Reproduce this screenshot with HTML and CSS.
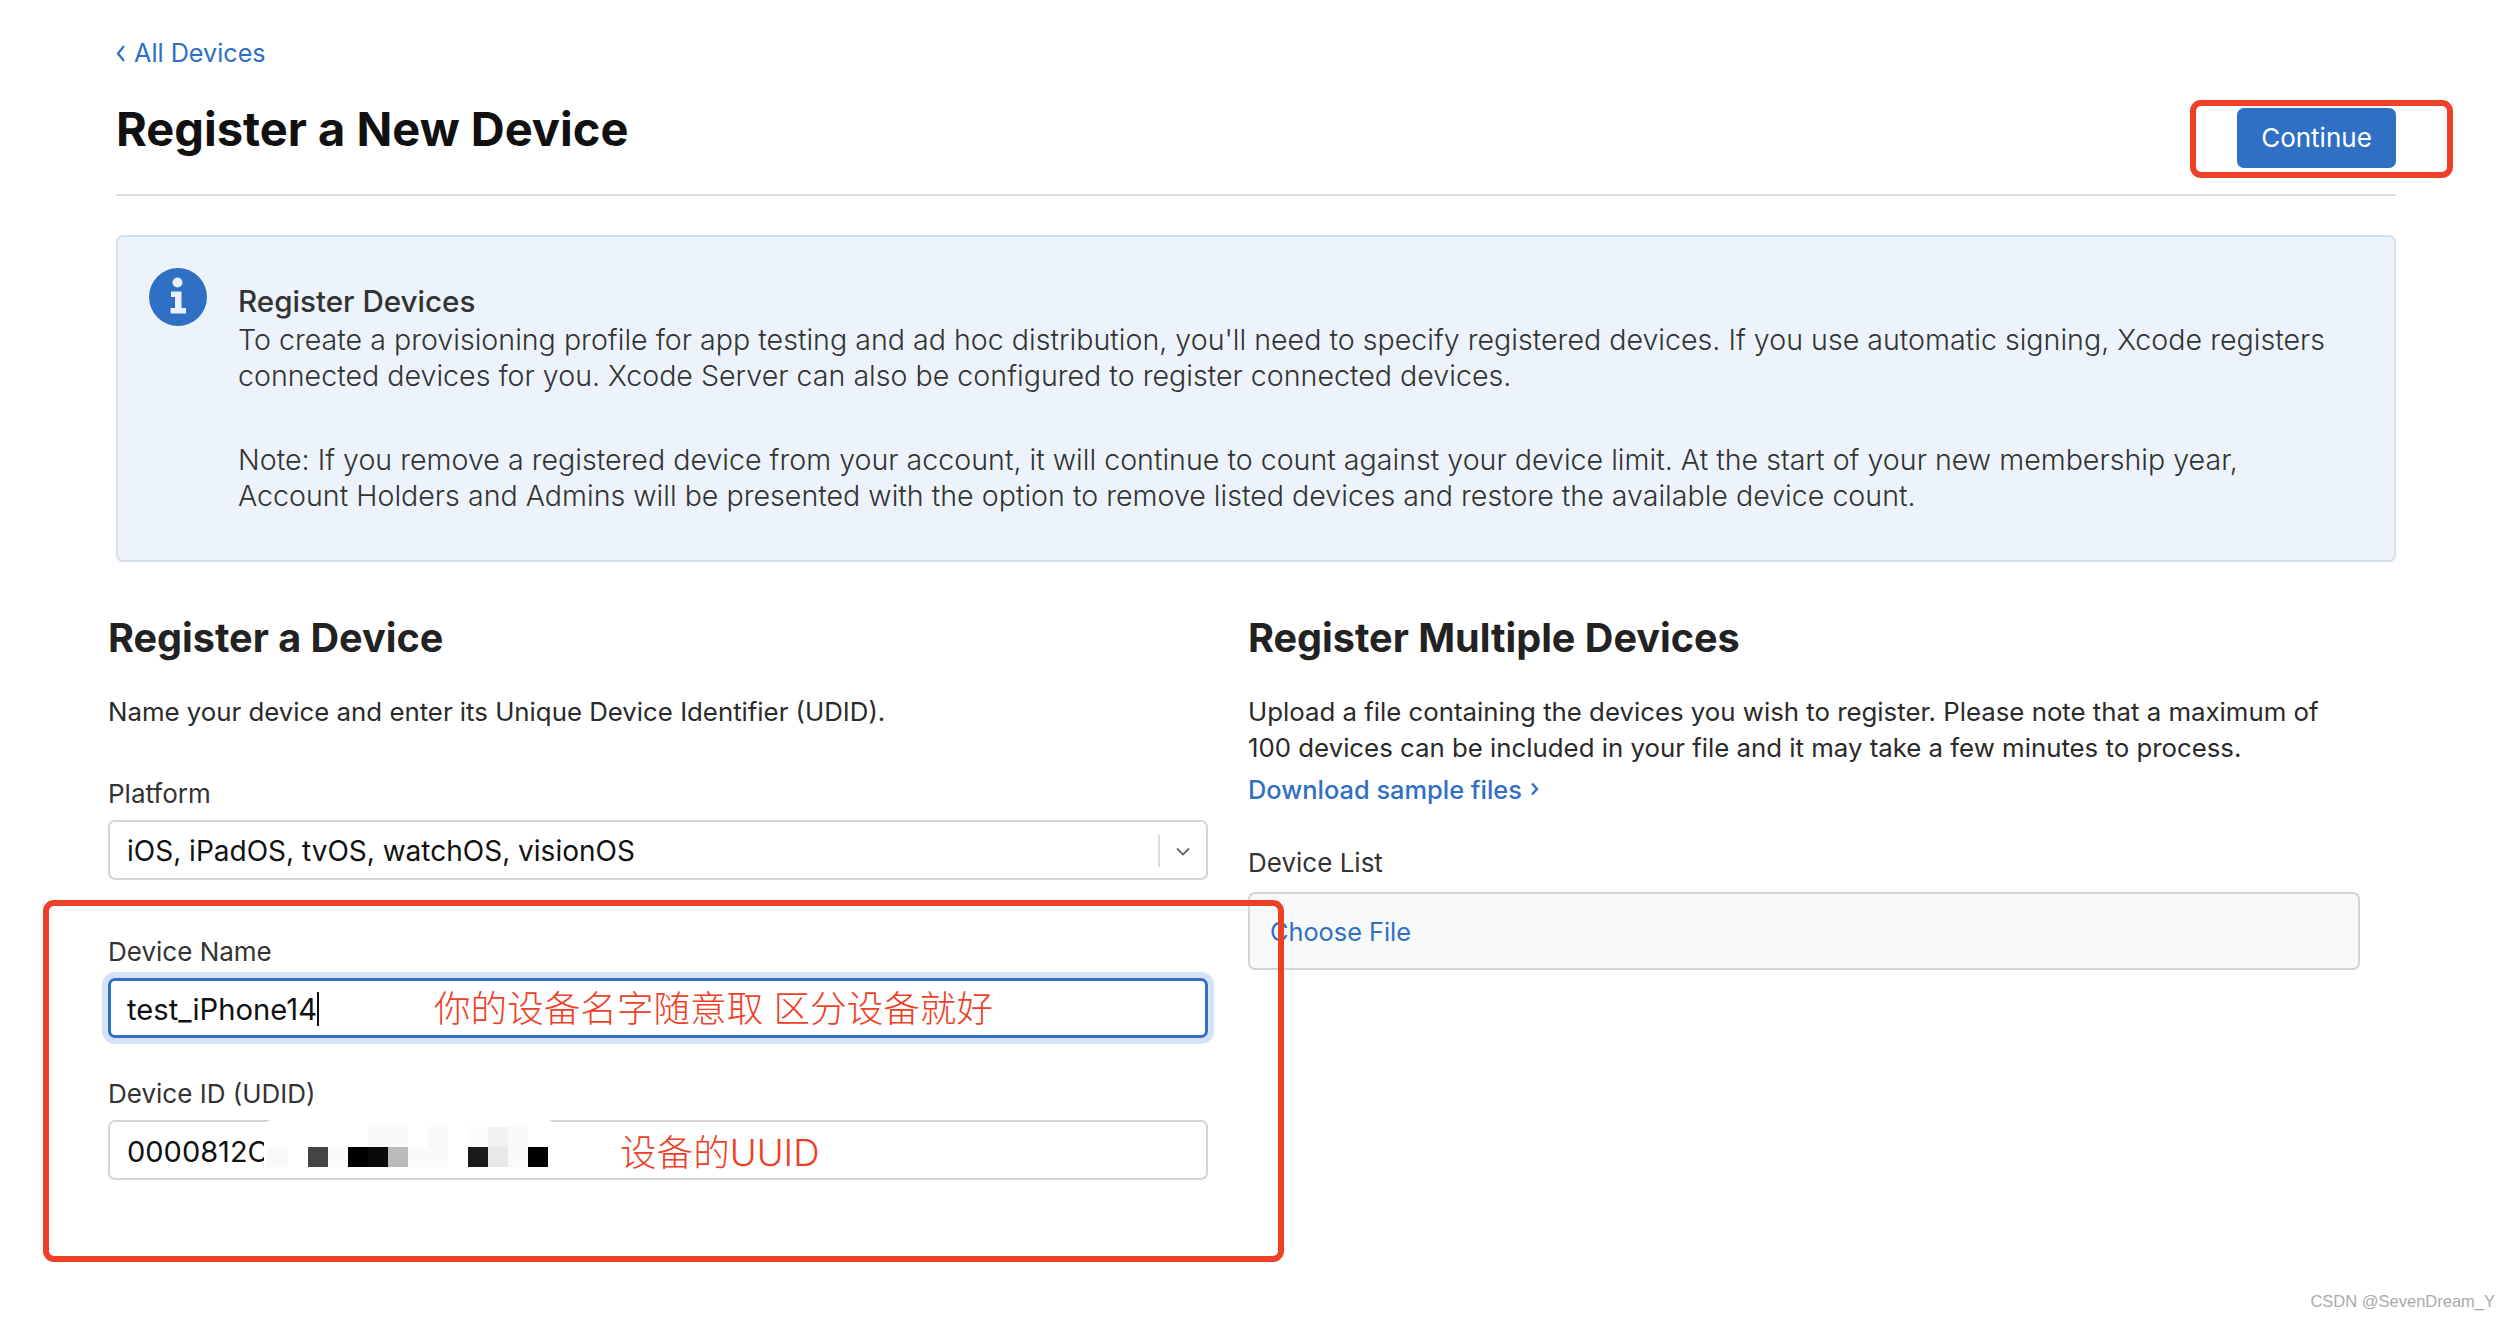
FILE: index.html
```html
<!DOCTYPE html>
<html lang="en">
<head>
    <meta charset="UTF-8">
    <title>Register a New Device</title>
    <link rel="stylesheet" href="styles.css">
</head>
<body>
    <div class="page">
        <a class="back" href="#">
            <svg class="back-icon" width="10" height="20" viewBox="0 0 10 20"><path d="M8 3 L2 10.5 L8 18" fill="none" stroke="#2f6fc4" stroke-width="2.2"/></svg>
            All Devices
        </a>
        <div class="header">
            <h1>Register a New Device</h1>
            <button class="continue">Continue</button>
        </div>

        <div class="info">
            <svg class="info-icon" width="58" height="58" viewBox="0 0 58 58">
                <circle cx="29" cy="29" r="29" fill="#2f6fc4"/>
                <circle cx="28.5" cy="14.5" r="5" fill="#e8f0fa"/>
                <path d="M22 23.5 H32.5 V40 H37 V45.5 H21.5 V40 H26 V29 H22 Z" fill="#e8f0fa"/>
            </svg>
            <div class="info-text">
                <h4>Register Devices</h4>
                <p class="lead">To create a provisioning profile for app testing and ad hoc distribution, you'll need to specify registered devices. If you use automatic signing, Xcode registers connected devices for you. Xcode Server can also be configured to register connected devices.</p>
                <p class="note">Note: If you remove a registered device from your account, it will continue to count against your device limit. At the start of your new membership year, Account Holders and Admins will be presented with the option to remove listed devices and restore the available device count.</p>
            </div>
        </div>

        <div class="columns">
            <div class="col col-single">
                <h2>Register a Device</h2>
                <p class="desc">Name your device and enter its Unique Device Identifier (UDID).</p>
                <label class="label label-platform">Platform</label>
                <div class="field select">
                    <span>iOS, iPadOS, tvOS, watchOS, visionOS</span>
                    <span class="select-arrow">
                        <svg width="14" height="9" viewBox="0 0 14 9"><path d="M1 1.5 L7 7.5 L13 1.5" fill="none" stroke="#666" stroke-width="1.8"/></svg>
                    </span>
                </div>
                <label class="label label-name">Device Name</label>
                <div class="field focused">
                    <span>test_iPhone14</span><span class="caret"></span>
                    <span class="note-red note-name">你的设备名字随意取 区分设备就好</span>
                </div>
                <label class="label label-udid">Device ID (UDID)</label>
                <div class="field">
                    <span>0000812C</span>
                    <svg class="mosaic" width="291" height="50" viewBox="-3 0 291 50">
                        <rect x="-3" width="291" height="50" rx="8" fill="#fff"/>
                        <rect x="0" y="27" width="21" height="20" fill="#f9f9f9"/>
                        <rect x="41" y="27" width="20" height="20" fill="#444"/>
                        <rect x="61" y="27" width="20" height="20" fill="#fafafa"/>
                        <rect x="81" y="27" width="20" height="20" fill="#000"/>
                        <rect x="101" y="27" width="20" height="20" fill="#0a0a0a"/>
                        <rect x="121" y="27" width="20" height="20" fill="#bbb"/>
                        <rect x="141" y="27" width="40" height="20" fill="#fafafa"/>
                        <rect x="201" y="27" width="20" height="20" fill="#1a1a1a"/>
                        <rect x="221" y="27" width="20" height="20" fill="#e8e8e8"/>
                        <rect x="241" y="27" width="20" height="20" fill="#fafafa"/>
                        <rect x="261" y="27" width="20" height="20" fill="#000"/>
                        <rect x="101" y="7" width="40" height="20" fill="#f9f9f9"/>
                        <rect x="161" y="7" width="20" height="20" fill="#f9f9f9"/>
                        <rect x="201" y="7" width="20" height="20" fill="#fbfbfb"/>
                        <rect x="221" y="7" width="20" height="20" fill="#f2f2f2"/>
                        <rect x="241" y="7" width="20" height="20" fill="#f9f9f9"/>
                    </svg>
                    <span class="note-red note-udid">设备的UUID</span>
                </div>
            </div>

            <div class="col col-multi">
                <h2>Register Multiple Devices</h2>
                <p class="desc">Upload a file containing the devices you wish to register. Please note that a maximum of 100 devices can be included in your file and it may take a few minutes to process.</p>
                <a class="sample" href="#">Download sample files
                    <svg width="9" height="16" viewBox="0 0 9 16"><path d="M2 2.5 L7 8 L2 13.5" fill="none" stroke="#2f6fc4" stroke-width="2.4"/></svg>
                </a>
                <label class="label label-list">Device List</label>
                <div class="file-box"><a href="#">Choose File</a></div>
            </div>
        </div>
    </div>

    <!-- red marks drawn over the screenshot -->
    <div class="mark mark-continue"></div>
    <div class="mark mark-form"></div>
    <div class="watermark">CSDN @SevenDream_Y</div>
</body>
</html>
```

FILE: styles.css
```css
*{
    margin: 0;
    padding: 0;
    box-sizing: border-box;
}
html, body{
    height: 1318px;
    overflow: hidden;
}
body{
    position: relative;
    background-color: #fff;
    font-family: Inter, "Noto Sans CJK SC", sans-serif;
    color: #333;
}
a{
    color: #2f6fc4;
    text-decoration: none;
}
.page{
    width: 2280px;
    margin-left: 116px;
    padding-top: 36px;
}
.back{
    display: flex;
    align-items: center;
    gap: 8px;
    height: 34px;
    font-size: 25.2px;
}
.header{
    display: flex;
    justify-content: space-between;
    align-items: flex-start;
    height: 126px;
    padding-top: 38px;
    border-bottom: 2px solid #ddd;
}
h1{
    margin-top: -7px;
    font-size: 47px;
    line-height: 56px;
    font-weight: 700;
    color: #111;
}
.continue{
    width: 159px;
    height: 60px;
    padding-bottom: 2px;
    background-color: #2f6fc4;
    color: #fff;
    border: none;
    border-radius: 7px;
    font-family: inherit;
    font-size: 26px;
}
.info{
    display: flex;
    height: 327px;
    margin-top: 39px;
    padding: 31px 30px 0 31px;
    background-color: #ecf3fa;
    border: 2px solid #cfe0f0;
    border-radius: 7px;
}
.info-icon{
    flex: none;
}
.info-text{
    width: 2100px;
    margin-left: 31px;
    padding-top: 15px;
    font-size: 28.6px;
    line-height: 36px;
    font-weight: 300;
}
.info-text h4{
    font-size: 29.6px;
    font-weight: 500;
}
.lead{
    margin-top: 3px;
}
.note{
    margin-top: 48px;
}
.columns{
    display: flex;
    gap: 40px;
    margin-left: -8px;
    margin-top: 53px;
}
.col-single{
    width: 1100px;
}
.col-multi{
    width: 1112px;
}
h2{
    font-size: 39.6px;
    line-height: 46px;
    font-weight: 700;
    color: #222;
}
.desc{
    margin-top: 33px;
    font-size: 25.8px;
    line-height: 36px;
    color: #2a2a2a;
}
.label{
    display: block;
    font-size: 26px;
    line-height: 30px;
}
.label-platform{
    margin-top: 49px;
}
.label-name{
    margin-top: 57px;
}
.label-udid{
    margin-top: 41px;
}
.label-list{
    margin-top: 41px;
}
.field{
    position: relative;
    display: flex;
    align-items: center;
    height: 60px;
    margin-top: 11px;
    padding-left: 17px;
    padding-top: 2px;
    border: 2px solid #d4d4d4;
    border-radius: 7px;
    font-size: 29px;
    font-weight: 400;
    color: #111;
}
.focused{
    border: 3px solid #2f6fc4;
    box-shadow: 0 0 0 6px #d5e2f3;
    padding-left: 16px;
    font-size: 29.2px;
}
.caret{
    width: 2px;
    height: 34px;
    background-color: #111;
}
.select{
    justify-content: space-between;
    font-size: 28px;
}
.select-arrow{
    display: flex;
    align-items: center;
    justify-content: center;
    width: 48px;
    height: 32px;
    border-left: 2px solid #ddd;
}
.mosaic{
    position: absolute;
    left: 154px;
    top: -2px;
}
.note-red{
    position: absolute;
    color: #ee4026;
    font-size: 36.6px;
    font-weight: 300;
    white-space: nowrap;
}
.note-name{
    left: 323px;
    top: -1px;
}
.note-udid{
    left: 510px;
    top: 2px;
}
.sample{
    display: flex;
    align-items: center;
    gap: 8px;
    margin-top: 5px;
    height: 36px;
    font-size: 25.4px;
    font-weight: 500;
}
.file-box{
    display: flex;
    align-items: center;
    height: 78px;
    margin-top: 14px;
    padding-left: 20px;
    background-color: #f8f9f9;
    border: 2px solid #d4d4d4;
    border-radius: 7px;
    font-size: 25.3px;
}
.mark{
    position: absolute;
    border: 6px solid #ee4026;
    border-radius: 11px;
}
.mark-continue{
    left: 2190px;
    top: 100px;
    width: 263px;
    height: 78px;
}
.mark-form{
    left: 43px;
    top: 900px;
    width: 1241px;
    height: 362px;
}
.watermark{
    position: absolute;
    right: 15px;
    top: 1291px;
    font-family: "Liberation Sans", sans-serif;
    font-size: 16.5px;
    line-height: 20px;
    color: #aaa;
}
```
